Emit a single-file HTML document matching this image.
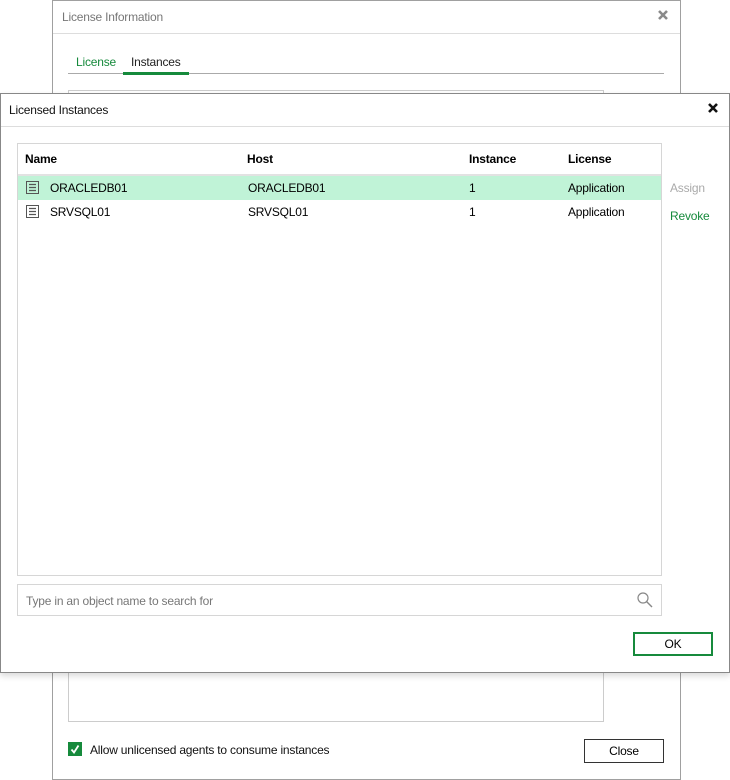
<!DOCTYPE html>
<html><head><style>
body{margin:0;width:730px;height:780px;background:#fff;position:relative;overflow:hidden;font-family:"Liberation Sans",sans-serif;font-size:12px;color:#000;letter-spacing:-0.2px}
.a{position:absolute;box-sizing:border-box}
</style></head><body>
<div class="a" style="left:52px;top:0;width:629px;height:780px;border:1px solid #a0a0a0;background:#fff"></div>
<div class="a" style="left:62px;top:10px;color:#777">License Information</div>
<svg class="a" style="left:657px;top:9px" width="12" height="12"><path d="M2 2L10 10M10 2L2 10" stroke="#8a8a8a" stroke-width="2.6"/></svg>
<div class="a" style="left:53px;top:33px;width:627px;height:1px;background:#ddd"></div>
<div class="a" style="left:76px;top:55px;color:#168a3c">License</div>
<div class="a" style="left:131px;top:55px;color:#222">Instances</div>
<div class="a" style="left:68px;top:73px;width:596px;height:1px;background:#aaa"></div>
<div class="a" style="left:123px;top:72px;width:66px;height:3px;background:#168a3c"></div>
<div class="a" style="left:68px;top:90px;width:536px;height:632px;border:1px solid #ccc"></div>
<div class="a" style="left:68px;top:742px;width:14px;height:14px;background:#168a3c"></div>
<svg class="a" style="left:68px;top:742px" width="14" height="14"><path d="M3.5 7.5L6 10.5L10.5 3.5" stroke="#fff" stroke-width="1.8" fill="none"/></svg>
<div class="a" style="left:90px;top:743px;color:#111">Allow unlicensed agents to consume instances</div>
<div class="a" style="left:584px;top:739px;width:80px;height:24px;border:1px solid #333;text-align:center;line-height:22px">Close</div>
<div class="a" style="left:0;top:93px;width:730px;height:580px;border:1px solid #888;background:#fff;box-shadow:0 3px 6px rgba(0,0,0,.15)"></div>
<div class="a" style="left:9px;top:103px;color:#111">Licensed Instances</div>
<svg class="a" style="left:707px;top:102px" width="12" height="12"><path d="M2 2L10 10M10 2L2 10" stroke="#111" stroke-width="2.6"/></svg>
<div class="a" style="left:1px;top:126px;width:728px;height:1px;background:#ddd"></div>
<div class="a" style="left:17px;top:143px;width:645px;height:433px;border:1px solid #d6d6d6"></div>
<div class="a" style="left:18px;top:174px;width:643px;height:2px;background:#e2e2e2"></div>
<div class="a" style="left:25px;top:152px;font-weight:bold">Name</div>
<div class="a" style="left:247px;top:152px;font-weight:bold">Host</div>
<div class="a" style="left:469px;top:152px;font-weight:bold">Instance</div>
<div class="a" style="left:568px;top:152px;font-weight:bold">License</div>
<div class="a" style="left:18px;top:176px;width:643px;height:24px;background:#c0f3d7"></div>
<svg class="a" style="left:26px;top:181px" width="13" height="13"><rect x=".5" y=".5" width="12" height="12" fill="none" stroke="#555"/><path d="M3 3.5h7M3 6.5h7M3 9.5h7" stroke="#555" stroke-width="1.3"/></svg>
<div class="a" style="left:50px;top:181px">ORACLEDB01</div>
<div class="a" style="left:248px;top:181px">ORACLEDB01</div>
<div class="a" style="left:469px;top:181px">1</div>
<div class="a" style="left:568px;top:181px">Application</div>
<svg class="a" style="left:26px;top:205px" width="13" height="13"><rect x=".5" y=".5" width="12" height="12" fill="none" stroke="#555"/><path d="M3 3.5h7M3 6.5h7M3 9.5h7" stroke="#555" stroke-width="1.3"/></svg>
<div class="a" style="left:50px;top:205px">SRVSQL01</div>
<div class="a" style="left:248px;top:205px">SRVSQL01</div>
<div class="a" style="left:469px;top:205px">1</div>
<div class="a" style="left:568px;top:205px">Application</div>
<div class="a" style="left:670px;top:181px;color:#aaa">Assign</div>
<div class="a" style="left:670px;top:209px;color:#168a3c">Revoke</div>
<div class="a" style="left:17px;top:584px;width:645px;height:32px;border:1px solid #d6d6d6"></div>
<div class="a" style="left:26px;top:594px;color:#777">Type in an object name to search for</div>
<svg class="a" style="left:636px;top:591px" width="18" height="18"><circle cx="7" cy="7" r="5" fill="none" stroke="#888" stroke-width="1.2"/><path d="M10.5 10.5L16 16" stroke="#888" stroke-width="1.4"/></svg>
<div class="a" style="left:633px;top:632px;width:80px;height:24px;border:2px solid #168a3c;text-align:center;line-height:20px">OK</div>
</body></html>
